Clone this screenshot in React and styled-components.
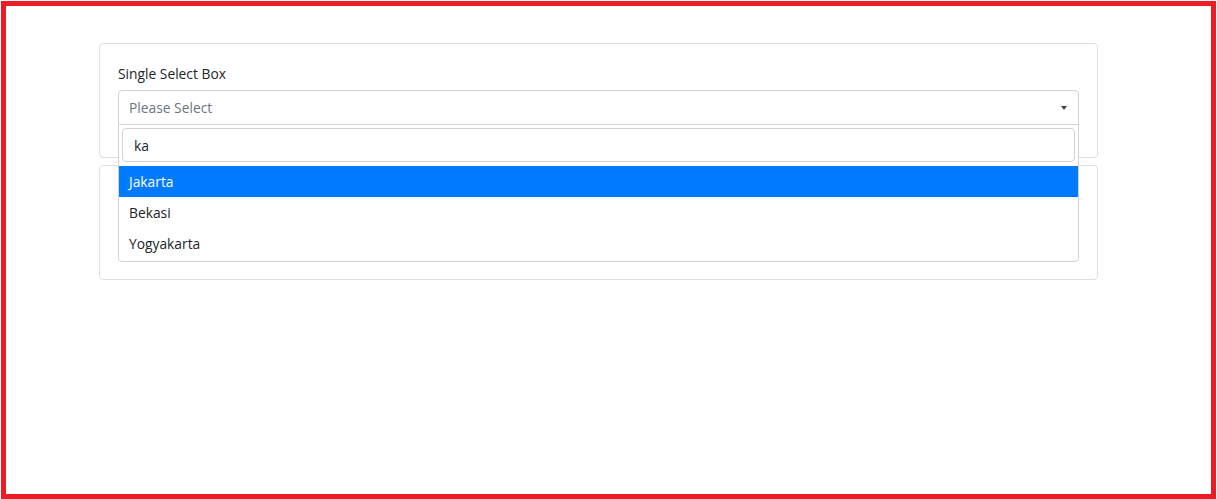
import React from "react";
import styled, { createGlobalStyle } from "styled-components";

const Global = createGlobalStyle`
  html, body { margin: 0; padding: 0; background: #fff; }
  body {
    font-family: "Open Sans", "Noto Sans", "Liberation Sans", sans-serif;
    font-size: 13.8px;
    color: #212529;
  }
  * { box-sizing: border-box; }
`;

const Frame = styled.div`
  margin: 1px 0 0 1px;
  width: 1215px;
  height: 498px;
  border: 5px solid #ed1c24;
  padding: 37px 0 0 93px;
  display: flex;
  flex-direction: column;
  gap: 7px;
`;

const Card = styled.div`
  position: relative;
  width: 999px;
  height: 115px;
  border: 1px solid #dfdfdf;
  border-radius: 4px;
  background: #fff;
  padding: 19px 18px 18px;
`;

const Label = styled.div`
  line-height: 21px;
  height: 21px;
  margin-bottom: 6px;
  color: #212529;
`;

const SelectWrap = styled.div`
  position: relative;
  z-index: 5;
`;

const Toggle = styled.div`
  height: 35px;
  border: 1px solid #ced4da;
  border-radius: 4px 4px 0 0;
  display: flex;
  align-items: center;
  justify-content: space-between;
  padding: 0 10px 0 10px;
  color: #6c757d;
  background: #fff;
`;

const Caret = styled.span`
  width: 0;
  height: 0;
  border-left: 3px solid transparent;
  border-right: 3px solid transparent;
  border-top: 4px solid #444;
  margin-right: 1px;
`;

const Dropdown = styled.div`
  position: absolute;
  left: 0;
  right: 0;
  top: 34px;
  background: #fff;
  border: 1px solid #ced4da;
  border-radius: 0 0 4px 4px;
  padding-bottom: 2px;
`;

const SearchBox = styled.div`
  padding: 3px;
`;

const SearchInput = styled.div`
  height: 34px;
  border: 1px solid #ced4da;
  border-radius: 4px;
  display: flex;
  align-items: center;
  padding: 0 11px;
  color: #212529;
  font-size: 14px;
`;

const Options = styled.ul`
  list-style: none;
  margin: 1px 0 0;
  padding: 0;
`;

const Option = styled.li`
  height: 31px;
  line-height: 31px;
  padding: 0 10px;
  background: ${(p) => (p.$active ? "#007bff" : "#fff")};
  color: ${(p) => (p.$active ? "#fff" : "#212529")};
`;

const options = ["Jakarta", "Bekasi", "Yogyakarta"];

export default function App() {
  return (
    <>
      <Global />
      <Frame>
        <Card>
          <Label>Single Select Box</Label>
          <SelectWrap>
            <Toggle>
              <span>Please Select</span>
              <Caret />
            </Toggle>
            <Dropdown>
              <SearchBox>
                <SearchInput>ka</SearchInput>
              </SearchBox>
              <Options>
                {options.map((o, i) => (
                  <Option key={o} $active={i === 0}>
                    {o}
                  </Option>
                ))}
              </Options>
            </Dropdown>
          </SelectWrap>
        </Card>
        <Card />
      </Frame>
    </>
  );
}
